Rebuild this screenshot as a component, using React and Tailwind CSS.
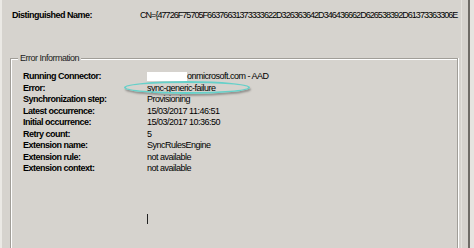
const rows = [
  { label: "Running Connector:", value: "redacted" },
  { label: "Error:", value: "sync-generic-failure" },
  { label: "Synchronization step:", value: "Provisioning" },
  { label: "Latest occurrence:", value: "15/03/2017 11:46:51" },
  { label: "Initial occurrence:", value: "15/03/2017 10:36:50" },
  { label: "Retry count:", value: "5" },
  { label: "Extension name:", value: "SyncRulesEngine" },
  { label: "Extension rule:", value: "not available" },
  { label: "Extension context:", value: "not available" },
];

const App = () => {
  return (
    <div className="w-[474px] h-[248px] bg-[#d6d3ce] flex overflow-hidden font-['Liberation_Sans',Arial,sans-serif] text-[9px] tracking-[-0.5px] text-black">
      {/* left edge */}
      <div className="w-[2px] bg-[#ebe9e5]" />

      <div className="w-[456px] flex flex-col pl-[8px]">
        {/* header */}
        <div className="h-[58px] pt-[10px] pl-[2px] flex leading-[11.5px] whitespace-nowrap">
          <div className="w-[128px] shrink-0 font-bold">Distinguished Name:</div>
          <div className="tracking-[-0.95px]">
            CN={"{"}47726F75705F66376631373333622D326363642D346436662D626538392D61373363306E
          </div>
        </div>

        {/* ERROR INFORMATION GROUP */}
        <div className="relative flex-1 border-t border-l border-r border-[#a19e98] shadow-[inset_1px_1px_0_#fff,1px_0_0_#fff] pt-[12px] pl-[12px]">
          <div className="absolute -top-[7px] left-[7px] bg-[#d6d3ce] px-[2px] leading-[12px] text-[#222]">
            Error Information
          </div>

          {rows.map((r) => (
            <div key={r.label} className="flex leading-[11.5px] whitespace-nowrap">
              <div className="w-[124px] font-bold">{r.label}</div>
              {r.value === "redacted" ? (
                <div className="flex items-center">
                  <span className="inline-block w-[40px] h-[9px] bg-white" />
                  <span>onmicrosoft.com - AAD</span>
                </div>
              ) : (
                <div>{r.value}</div>
              )}
            </div>
          ))}

          {/* caret */}
          <div className="ml-[124px] mt-[39px] w-px h-[10px] bg-[#222]" />

          {/* highlight ring */}
          <div className="absolute left-[113px] top-[22px] w-[126px] h-[13px] rounded-[50%] border-[2.5px] border-[#66d0c9] shadow-[1px_2px_2px_rgba(0,0,0,0.3)]" />
        </div>
      </div>

      {/* right edge */}
      <div className="w-[3px]" />
      <div className="w-px bg-[#e4e2dd]" />
      <div className="w-[6px]" />
      <div className="w-[2px] bg-[#6e6b66]" />
      <div className="flex-1 bg-[#e6e4e0]" />
    </div>
  );
};

export default App;
